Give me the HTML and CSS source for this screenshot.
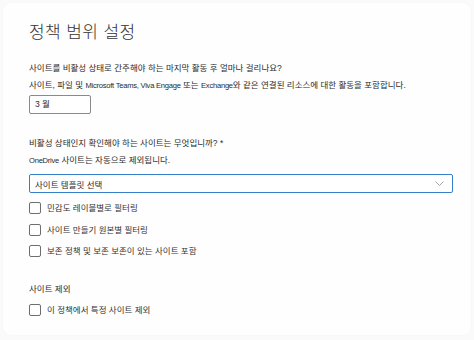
FILE: index.html
```html
<!DOCTYPE html>
<html lang="ko">
<head>
<meta charset="utf-8">
<link rel="stylesheet" href="styles.css">
</head>
<body>
<div class="card">
  <h1 class="title">정책 범위 설정</h1>
  <section class="block">
    <p class="q">사이트를 비활성 상태로 간주해야 하는 마지막 활동 후 얼마나 걸리나요?</p>
    <p class="hint">사이트, 파일 및 <span class="lat">Microsoft Teams, Viva Engage</span> 또는 <span class="lat">Exchange</span>와 같은 연결된 리소스에 대한 활동을 포함합니다.</p>
    <div class="input">3 월</div>
  </section>
  <section class="block second">
    <p class="q">비활성 상태인지 확인해야 하는 사이트는 무엇입니까? *</p>
    <p class="hint"><span class="lat">OneDrive</span> 사이트는 자동으로 제외됩니다.</p>
    <div class="select">
      <span>사이트 템플릿 선택</span>
      <svg class="chev" width="9" height="5" viewBox="0 0 9 5"><path d="M0.5 0.5 L4.5 4.5 L8.5 0.5" fill="none" stroke="#9a9a9a" stroke-width="0.9"/></svg>
    </div>
    <div class="checks">
      <label class="check"><span class="box"></span>민감도 레이블별로 필터링</label>
      <label class="check"><span class="box"></span>사이트 만들기 원본별 필터링</label>
      <label class="check"><span class="box"></span>보존 정책 및 보존 보존이 있는 사이트 포함</label>
    </div>
  </section>
  <section class="block third">
    <p class="q">사이트 제외</p>
    <label class="check"><span class="box"></span>이 정책에서 특정 사이트 제외</label>
  </section>
</div>
</body>
</html>
```

FILE: styles.css
```css
* { box-sizing: border-box; }
html, body { margin: 0; padding: 0; }
body {
  width: 474px;
  height: 340px;
  background: #fafafa;
  font-family: "Liberation Sans", "Noto Sans CJK KR", sans-serif;
  color: #2b2b2b;
  padding: 3px 3px 5px 3px;
}
.card {
  background: #fefefe;
  border-radius: 8px;
  box-shadow: 0 0 1.5px rgba(0,0,0,0.05);
  height: 332px;
  padding: 16px 18px 0 26px;
}
.title {
  margin: 0;
  font-family: "Noto Sans CJK KR", sans-serif;
  font-weight: 300;
  font-size: 17px;
  letter-spacing: 0.4px;
  line-height: 24px;
  color: #333;
}
p { margin: 0; }
.block { margin-top: 16px; }
.q, .hint {
  font-size: 8.5px;
  line-height: 18px;
  color: #2b2b2b;
}
.hint { margin-top: -1px; }
.lat { font-size: 7.6px; letter-spacing: -0.25px; }
.input {
  margin-top: 0;
  width: 62px;
  height: 19px;
  border: 1px solid #8a8a8a;
  border-radius: 2px;
  font-size: 8.5px;
  line-height: 17px;
  padding-left: 5px;
  background: #fff;
}
.second { margin-top: 20px; }
.select {
  margin-top: 4px;
  height: 19px;
  border: 1.5px solid #3580c8;
  border-radius: 2px;
  display: flex;
  align-items: center;
  justify-content: space-between;
  padding: 0 8px 0 5px;
  font-size: 8.5px;
  background: #fff;
}
.chev { display: block; }
.checks {
  margin-top: 9px;
  display: flex;
  flex-direction: column;
  gap: 9.5px;
}
.check {
  display: flex;
  align-items: center;
  gap: 6px;
  font-size: 8.5px;
  line-height: 12px;
  color: #333;
}
.box {
  width: 12px;
  height: 12px;
  border: 1px solid #6e6e6e;
  border-radius: 2px;
  background: #fff;
  flex: none;
}
.third { margin-top: 23px; }
.third .check { margin-top: 6px; }
```
